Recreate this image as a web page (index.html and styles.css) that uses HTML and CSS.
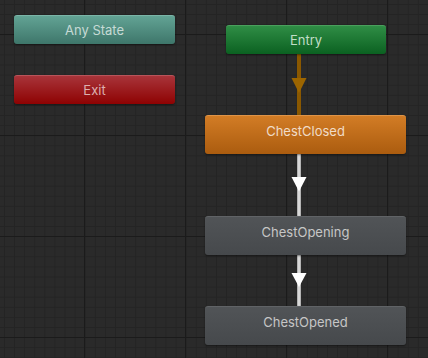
FILE: index.html
```html
<!DOCTYPE html>
<html lang="en">
  <head>
    <meta charset="UTF-8" />
    <meta name="viewport" content="width=device-width, initial-scale=1.0" />
    <title>Animator</title>
    <link rel="stylesheet" href="styles.css">
  </head>
  <body>
    <div class="graph">
      <!-- transitions -->
      <svg class="links" width="428" height="358" viewBox="0 0 428 358">
        <rect x="297" y="54" width="4" height="61" fill="#8a5800" />
        <polygon points="291.5,78 306.5,78 299,93" fill="#9c6500" />

        <rect x="297" y="154" width="4" height="62" fill="#b4b4b4" />
        <rect x="298" y="154" width="2" height="62" fill="#d8d8d8" />
        <polygon points="291.5,177 306.5,177 299,191.5" fill="#ffffff" />

        <rect x="297" y="255" width="4" height="51" fill="#b4b4b4" />
        <rect x="298" y="255" width="2" height="51" fill="#d8d8d8" />
        <polygon points="291.5,273 306.5,273 299,287" fill="#ffffff" />
      </svg>

      <div class="node any" style="left:14px;top:15px;width:161px;height:29px">Any State</div>
      <div class="node exit" style="left:14px;top:75px;width:161px;height:29px">Exit</div>
      <div class="node entry" style="left:226px;top:25px;width:160px;height:29px">Entry</div>
      <div class="node state default" style="left:205px;top:115px;width:201px;height:39px">ChestClosed</div>
      <div class="node state" style="left:205px;top:216px;width:201px;height:39px">ChestOpening</div>
      <div class="node state" style="left:205px;top:306px;width:201px;height:39px">ChestOpened</div>
    </div>
  </body>
</html>
```

FILE: styles.css
```css
body {
  margin: 0;
  background: #2a2a2a;
  font-family: Inter, "Noto Sans", sans-serif;
}
.graph {
  position: relative;
  width: 428px;
  height: 358px;
  overflow: hidden;
  background-color: #2a2a2a;
  background-image:
    linear-gradient(to right, #1b1b1b 1px, transparent 1px),
    linear-gradient(to bottom, #1b1b1b 1px, transparent 1px),
    linear-gradient(to right, #242424 1px, transparent 1px),
    linear-gradient(to bottom, #242424 1px, transparent 1px);
  background-size: 101px 101px, 101px 101px, 10.1px 10.1px, 10.1px 10.1px;
  background-position: 84px 0, 0 34px, 4px 0, 0 4px;
}
.links {
  position: absolute;
  left: 0;
  top: 0;
}
.node {
  position: absolute;
  box-sizing: border-box;
  display: flex;
  align-items: center;
  justify-content: center;
  border-radius: 3px;
  font-size: 13px;
  box-shadow: 0 1px 2px rgba(0, 0, 0, 0.45);
}
.any {
  background: linear-gradient(#62a394, #3e766a);
  border-top: 1px solid #7bb5a8;
  color: #c6dad5;
}
.exit {
  background: linear-gradient(#a8343a, #8e0202);
  border-top: 1px solid #b8545a;
  color: #dcb0b0;
}
.entry {
  background: linear-gradient(#2f8d45, #0b6121);
  border-top: 1px solid #4aa05d;
  color: #c0dec7;
}
.state {
  padding-bottom: 8px;
  background: linear-gradient(#515457, #46494c);
  border-top: 1px solid #606366;
  color: #c6c6c6;
}
.state.default {
  background: linear-gradient(#d27c25, #ab5c0f);
  border-top: 1px solid #de9448;
  color: #f0dcc8;
}
```
